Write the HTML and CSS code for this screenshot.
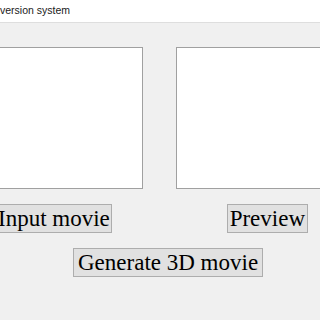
FILE: index.html
```html
<!DOCTYPE html>
<html>
	<head>
		<meta charset="utf-8">
		<title>conversion system</title>
		<link rel="stylesheet" href="styles.css">
	</head>
	<body>
		<div class="titlebar"><span class="title">version system</span></div>
		<div class="main">
			<div class="screens">
				<div class="screen"></div>
				<div class="screen"></div>
			</div>
			<div class="row">
				<button type="button" class="btn input">Input movie</button>
				<button type="button" class="btn preview">Preview</button>
			</div>
			<div class="row">
				<button type="button" class="btn generate">Generate 3D movie</button>
			</div>
		</div>
	</body>
</html>
```

FILE: styles.css
```css
*{
	margin: 0px;
	padding: 0px;
	box-sizing: border-box;
}
html, body{
	width: 320px;
	height: 320px;
	overflow: hidden;
}
body{
	background: #f0f0f0;
}
.titlebar{
	height: 23px;
	background: #fff;
	border-bottom: 1px solid #dedede;
	font-family: "Liberation Sans", Arial, sans-serif;
	font-size: 10.5px;
	color: #1a1a1a;
	line-height: 20px;
}
.main{
	padding-top: 24px;
}
.screens{
	display: flex;
	gap: 33px;
	margin-left: -3px;
}
.screen{
	width: 146px;
	height: 142px;
	background: #fff;
	border: 1px solid #a0a0a0;
	flex: none;
}
.row{
	display: flex;
	margin-top: 15px;
}
.btn{
	font-family: "Liberation Serif", "Times New Roman", serif;
	font-size: 23px;
	line-height: 27px;
	color: #000;
	background: #e1e1e1;
	border: 1px solid #adadad;
	padding: 0px 2px;
}
.input{
	margin-left: -4px;
	padding: 0px 1px;
}
.preview{
	margin-left: auto;
	margin-right: 12px;
}
.generate{
	margin-left: 73px;
	padding: 0px 4px;
}
```
